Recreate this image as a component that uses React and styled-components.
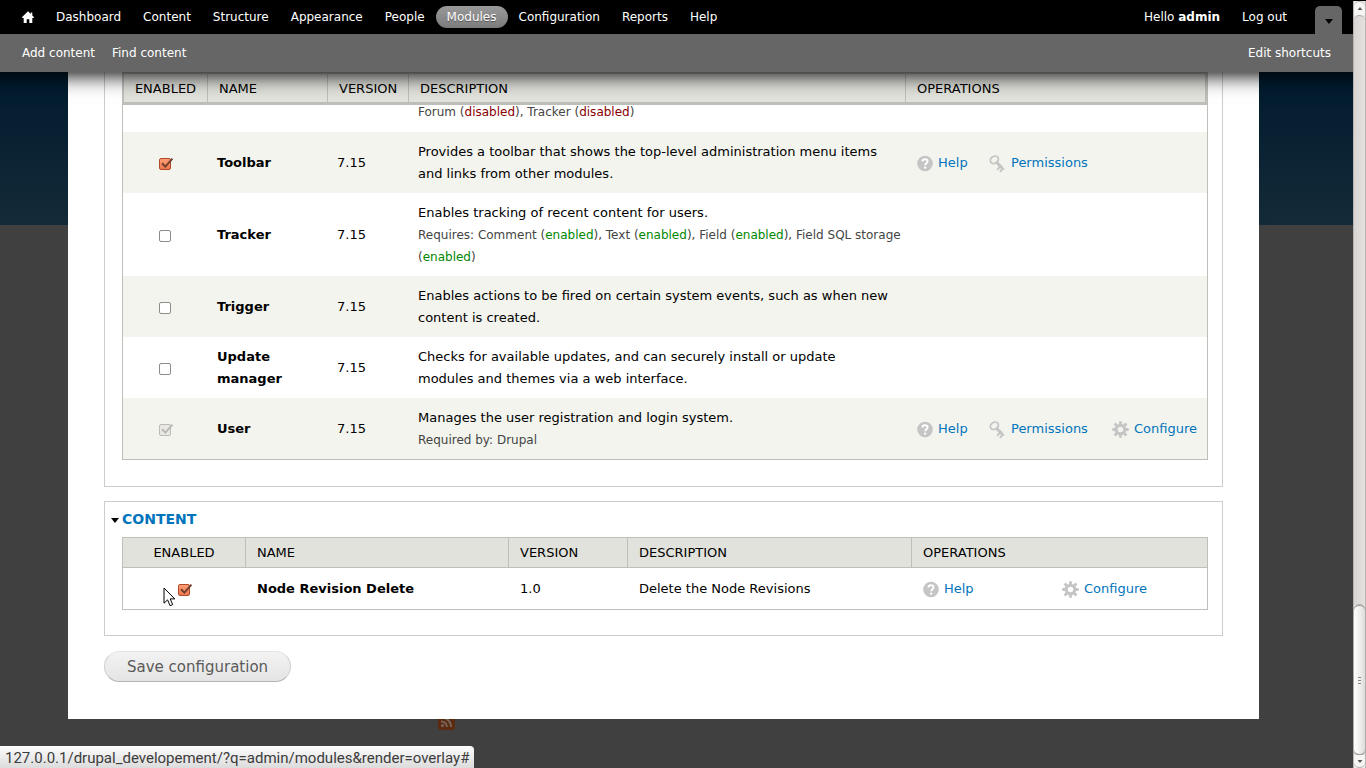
import React from "react"
import styled, { createGlobalStyle, css } from "styled-components"

const GlobalStyle = createGlobalStyle`
  * {
    box-sizing: border-box;
  }
  body {
    margin: 0;
    overflow: hidden;
    font-family: "DejaVu Sans", Verdana, sans-serif;
    font-size: 13px;
    line-height: 22px;
    color: #000;
  }
  a {
    color: #0074bd;
    text-decoration: none;
  }
`

const Screen = styled.div`
  display: flex;
  height: 100vh;
  background: #000;
`

const Viewport = styled.div`
  position: relative;
  flex: 1;
  min-width: 0;
  overflow: hidden;
  background: linear-gradient(#001b2e 72px, #142a38 225px, #404040 225px);
`

/* toolbar */

const Toolbar = styled.header`
  position: relative;
  z-index: 10;
  margin: 0 -20px;
  padding: 0 20px;
  background: #666;
  box-shadow: 0 3px 20px #000;
  font-size: 12px;
  a {
    color: #fff;
  }
`

const ToolbarMenu = styled.div`
  display: flex;
  justify-content: space-between;
  height: 34px;
  margin: 0 -20px;
  padding: 0 31px;
  background: #000;
`

const MenuList = styled.nav`
  display: flex;
  align-items: center;
`

const MenuLink = styled.a`
  display: flex;
  align-items: center;
  height: 22px;
  padding: 0 11px;
  border-radius: 11px;
  white-space: pre;
  ${({ $active }) =>
    $active &&
    css`
      background: linear-gradient(#999, #7c7c7c);
      text-shadow: 0 1px 0 #555;
    `}
`

const DrawerToggle = styled.button`
  display: flex;
  align-items: center;
  justify-content: center;
  align-self: flex-end;
  width: 27px;
  height: 28px;
  margin-left: 17px;
  padding: 2px 0 0;
  border: 0;
  border-radius: 5px 5px 0 0;
  background: #666;
`

const ToolbarDrawer = styled.div`
  display: flex;
  align-items: center;
  justify-content: space-between;
  height: 38px;
  padding: 0 22px;
`

const Shortcuts = styled.nav`
  display: flex;
  gap: 17px;
`

/* overlay */

const Sheet = styled.main`
  position: relative;
  margin: 0 94px 0 68px;
  padding: 0 36px 37px;
  background: #fff;
`

const Fieldset = styled.section`
  margin-bottom: 15px;
  padding: 7px 14px 25px 17px;
  border: 1px solid #ccc;
  ${({ $scrolled }) =>
    $scrolled &&
    css`
      margin-bottom: 14px;
      padding: 0 14px 26px 17px;
      border-top: 0;
    `}
`

const Legend = styled.h2`
  display: flex;
  align-items: center;
  gap: 3px;
  height: 20px;
  margin: 0 0 8px -11px;
  font-size: 14px;
  text-transform: uppercase;
  svg {
    margin-top: 2px;
  }
`

const ModuleTable = styled.table`
  width: 100%;
  table-layout: fixed;
  border: 1px solid #bebfb9;
  border-spacing: 0;
  td {
    padding: 9px ${({ $gutter }) => $gutter}px 8px;
  }
  td:first-child {
    padding: 0;
    text-align: center;
  }
  ${({ $sticky }) =>
    $sticky &&
    css`
      border-top: 0;
      th {
        height: 33px;
        padding-top: 1px;
        border-top: 2px solid #bebfb9;
        border-bottom-width: 3px;
      }
      th:first-child {
        padding-top: 1px;
        border-left: 1px solid #bebfb9;
      }
      th:last-child {
        border-right: 2px solid #bebfb9;
      }
    `}
`

const Col = styled.col`
  width: ${({ $width }) => ($width ? `${$width}px` : "auto")};
`

const HeadCell = styled.th`
  height: 30px;
  padding: 0 11px;
  border-bottom: 1px solid #bebfb9;
  background: #e1e2dc;
  font-weight: normal;
  line-height: 20px;
  text-align: left;
  text-transform: uppercase;
  & + & {
    border-left: 1px solid #bebfb9;
  }
  &:first-child {
    padding: 0;
    text-align: center;
  }
`

const Row = styled.tr`
  background: ${({ $even }) => ($even ? "#f3f4ee" : "#fff")};
  height: ${({ $height }) => ($height ? `${$height}px` : "auto")};
`

const ScrolledRow = styled.tr`
  && td {
    padding-top: 0;
    padding-bottom: 13px;
    line-height: 14px;
  }
`

const DescriptionCell = styled.td`
  && {
    padding-right: 16px;
  }
`

const Requirements = styled.div`
  margin-right: -16px;
  font-size: 12px;
  line-height: ${({ $tight }) => ($tight ? "14px" : "22px")};
  color: #444;
`

const Status = styled.span`
  color: ${({ $on }) => ($on ? "#080" : "#800")};
`

const ModuleName = styled.label`
  font-weight: bold;
`

const CheckWrap = styled.span`
  position: relative;
  display: inline-block;
  width: 12px;
  height: 12px;
  margin-top: 1px;
  vertical-align: middle;
  svg {
    position: absolute;
    top: -1px;
    left: 0;
    pointer-events: none;
  }
`

const CheckInput = styled.input`
  appearance: none;
  display: block;
  width: 12px;
  height: 12px;
  margin: 0;
  border: 1px solid #8f8b87;
  border-radius: 2px;
  background: #fff;
  &:checked {
    border-color: #b0482a;
    background: linear-gradient(#ff9d75, #ee7a50);
  }
  &:disabled {
    border-color: #bdbbb7;
    background: #e9e8e4;
  }
`

const OperationCell = styled.td`
  && {
    padding-left: 12px;
    padding-right: 0;
  }
`

const OperationLink = styled.a`
  display: flex;
  align-items: center;
  gap: 5px;
  svg {
    flex: none;
    margin-top: 1px;
  }
`

const SaveButton = styled.button`
  display: block;
  height: 31px;
  padding: 0 22px;
  border: 1px solid #d0d0d0;
  border-top-color: #e4e4e4;
  border-bottom-color: #b4b4b4;
  border-radius: 16px;
  background: linear-gradient(#f3f3f3, #e4e4e4);
  color: #5a5a5a;
  font-family: inherit;
  font-size: 15px;
`

/* things lying over the page */

const FeedIcon = styled.svg`
  position: absolute;
  top: 714px;
  left: 438px;
`

const StatusBubble = styled.div`
  position: absolute;
  bottom: 0;
  left: 0;
  height: 22px;
  padding: 0 5px;
  border-top: 1px solid #fff;
  border-radius: 0 4px 0 0;
  background: linear-gradient(#fbfbfb, #dcdcdc);
  color: #3c3c3c;
  font-family: Roboto, sans-serif;
  font-size: 15px;
`

const Cursor = styled.svg`
  position: absolute;
  top: 587px;
  left: 163px;
  z-index: 20;
`

/* scrollbar */

const Scrollbar = styled.div`
  display: flex;
  flex-direction: column;
  width: 13px;
  margin-top: 1px;
  border: 1px solid #b8b4b1;
  border-width: 0 1px;
  background: #edebea;
`

const ScrollTip = styled.div`
  display: flex;
  align-items: center;
  justify-content: center;
  height: ${({ $height }) => $height}px;
  border: 1px solid #b8b4b1;
  border-width: ${({ $end }) => ($end ? "0 0 1px" : "1px 0 0")};
  border-radius: ${({ $end }) => ($end ? "0 0 6px 6px" : "6px 6px 0 0")};
  background: #f6f5f4;
`

const ScrollTrack = styled.div`
  flex: 1;
  border-top: 1px solid #a9a5a2;
  border-radius: 6px 6px 0 0;
  background: linear-gradient(90deg, #d8d4d2, #e4e1df);
`

const ScrollThumb = styled.div`
  display: flex;
  flex-direction: column;
  align-items: center;
  justify-content: center;
  gap: 2px;
  height: 150px;
  border: 1px solid #979390;
  border-width: 1px 0;
  border-radius: 6px;
  background: linear-gradient(90deg, #fff, #f1f0ef 50%, #dedbd9);
  box-shadow: 0 0 0 1px #b0aca9;
  span {
    width: 3px;
    height: 1px;
    background: #8a8784;
  }
`

const HomeIcon = () => (
  <svg width="12" height="12" viewBox="0 0 12 12" aria-label="Home">
    <path
      d="M6 0.3 0.2 6v1h1.5v5h3V8.2h2.6V12h3V7h1.5V6L10.3 4.4V1.6H8.8V3z"
      fill="#fff"
    />
  </svg>
)

const Arrow = ({ width = 8, height = 5, color = "#000", up }) => (
  <svg width={width} height={height} viewBox="0 0 8 5">
    <path d={up ? "M0 5h8L4 0z" : "M0 0h8L4 5z"} fill={color} />
  </svg>
)

const HelpIcon = () => (
  <svg width="16" height="17" viewBox="0 0 16 17">
    <circle cx="8" cy="8.5" r="7.8" fill="#c5c5c5" />
    <path
      d="M5.4 6.6C5.4 4.9 6.5 4.2 8 4.2s2.6.8 2.6 2.1c0 1.9-2.4 1.9-2.4 4"
      fill="none"
      stroke="#fff"
      strokeWidth="1.9"
    />
    <circle cx="8.1" cy="12.6" r="1.2" fill="#fff" />
  </svg>
)

const KeyIcon = () => (
  <svg width="17" height="18" viewBox="0 0 17 18" fill="none" stroke="#c5c5c5">
    <ellipse
      cx="5.4"
      cy="4.8"
      rx="4.3"
      ry="3.4"
      strokeWidth="1.8"
      transform="rotate(-35 5.4 4.8)"
    />
    <path d="M7.4 7.2l6 6" strokeWidth="3" />
    <path d="M11.4 11.2l-3.2 3.6M14 13.2l-3 3.8" strokeWidth="2" />
    <path d="M11 8.6l4.8 6.2-3.6.2z" fill="#c5c5c5" stroke="none" />
  </svg>
)

const GearIcon = () => (
  <svg width="17" height="17" viewBox="0 0 17 17" fill="none" stroke="#c5c5c5">
    <circle cx="8.5" cy="8.5" r="4.3" strokeWidth="3.1" />
    <g strokeWidth="2.8">
      <path d="M8.5 0.3v3M8.5 13.7v3M0.3 8.5h3M13.7 8.5h3" />
      <path d="M2.6 2.6l2.2 2.2M12.2 12.2l2.2 2.2M14.4 2.6l-2.2 2.2M4.8 12.2l-2.2 2.2" />
    </g>
  </svg>
)

const Operation = ({ icon: Icon, children }) => (
  <OperationCell>
    {children && (
      <OperationLink href="#">
        <Icon />
        {children}
      </OperationLink>
    )}
  </OperationCell>
)

const Checkbox = ({ id, checked, disabled }) => (
  <CheckWrap>
    <CheckInput
      type="checkbox"
      id={id}
      defaultChecked={checked}
      disabled={disabled}
    />
    {checked && (
      <svg width="15" height="12" viewBox="0 0 15 12">
        <path
          d="M3 6.2l3.4 3.4L13.4 1.6"
          fill="none"
          stroke={disabled ? "#bab8b5" : "#70402f"}
          strokeWidth="2"
        />
      </svg>
    )}
  </CheckWrap>
)

const TableHead = ({ widths }) => (
  <>
    <colgroup>
      {widths.map((width, i) => (
        <Col key={i} $width={width} />
      ))}
    </colgroup>
    <thead>
      <tr>
        <HeadCell>Enabled</HeadCell>
        <HeadCell>Name</HeadCell>
        <HeadCell>Version</HeadCell>
        <HeadCell>Description</HeadCell>
        <HeadCell colSpan={3}>Operations</HeadCell>
      </tr>
    </thead>
  </>
)

const ModuleRow = ({ module, even, height }) => {
  const { id, name, version, description, requires, ops = [] } = module
  return (
    <Row $even={even} $height={height}>
      <td>
        <Checkbox id={id} checked={module.checked} disabled={module.locked} />
      </td>
      <td>
        <ModuleName htmlFor={id}>{name}</ModuleName>
      </td>
      <td>{version}</td>
      <DescriptionCell>
        {description}
        {requires && <Requirements>{requires}</Requirements>}
      </DescriptionCell>
      <Operation icon={HelpIcon}>{ops.includes("help") && "Help"}</Operation>
      <Operation icon={KeyIcon}>
        {ops.includes("permissions") && "Permissions"}
      </Operation>
      <Operation icon={GearIcon}>
        {ops.includes("configure") && "Configure"}
      </Operation>
    </Row>
  )
}

const enabled = <Status $on>enabled</Status>
const disabled = <Status>disabled</Status>

const coreModules = [
  {
    id: "toolbar",
    name: "Toolbar",
    version: "7.15",
    checked: true,
    description:
      "Provides a toolbar that shows the top-level administration menu items and links from other modules.",
    ops: ["help", "permissions"],
  },
  {
    id: "tracker",
    name: "Tracker",
    version: "7.15",
    description: "Enables tracking of recent content for users.",
    requires: (
      <>
        Requires: Comment ({enabled}), Text ({enabled}), Field ({enabled}),
        Field SQL storage ({enabled})
      </>
    ),
  },
  {
    id: "trigger",
    name: "Trigger",
    version: "7.15",
    description:
      "Enables actions to be fired on certain system events, such as when new content is created.",
  },
  {
    id: "update",
    name: "Update manager",
    version: "7.15",
    description:
      "Checks for available updates, and can securely install or update modules and themes via a web interface.",
  },
  {
    id: "user",
    name: "User",
    version: "7.15",
    checked: true,
    locked: true,
    description: "Manages the user registration and login system.",
    requires: "Required by: Drupal",
    ops: ["help", "permissions", "configure"],
  },
]

const nodeRevisionDelete = {
  id: "node-revision-delete",
  name: "Node Revision Delete",
  version: "1.0",
  checked: true,
  description: "Delete the Node Revisions",
  ops: ["help", "configure"],
}

const menu = [
  "Dashboard",
  "Content",
  "Structure",
  "Appearance",
  "People",
  "Modules",
  "Configuration",
  "Reports",
  "Help",
]

const App = () => {
  return (
    <Screen>
      <GlobalStyle />
      <Viewport>
        <Toolbar>
          <ToolbarMenu>
            <MenuList>
              <MenuLink href="#">
                <HomeIcon />
              </MenuLink>
              {menu.map(item => (
                <MenuLink href="#" key={item} $active={item === "Modules"}>
                  {item}
                </MenuLink>
              ))}
            </MenuList>
            <MenuList>
              <MenuLink href="#">
                Hello <strong>admin</strong>
              </MenuLink>
              <MenuLink href="#">Log out</MenuLink>
              <DrawerToggle aria-label="Hide shortcuts">
                <Arrow />
              </DrawerToggle>
            </MenuList>
          </ToolbarMenu>
          <ToolbarDrawer>
            <Shortcuts>
              <a href="#">Add content</a>
              <a href="#">Find content</a>
            </Shortcuts>
            <a href="#">Edit shortcuts</a>
          </ToolbarDrawer>
        </Toolbar>

        <FeedIcon width="17" height="16" viewBox="0 0 17 16">
          <rect width="17" height="16" rx="3" fill="#5c2a10" />
          <g fill="none" stroke="#77655c" strokeWidth="2">
            <path d="M3 3.5a9.5 9.5 0 0 1 10 9.5M3 7.5a5.5 5.5 0 0 1 6 5.5" />
          </g>
          <circle cx="4.5" cy="11.5" r="1.6" fill="#77655c" />
        </FeedIcon>

        <Sheet>
          <Fieldset $scrolled>
            <ModuleTable $sticky $gutter={10}>
              <TableHead widths={[84, 120, 81, null, 72, 123, 107]} />
              <tbody>
                <ScrolledRow>
                  <td />
                  <td />
                  <td />
                  <DescriptionCell>
                    <Requirements $tight>
                      Forum ({disabled}), Tracker ({disabled})
                    </Requirements>
                  </DescriptionCell>
                  <td colSpan={3} />
                </ScrolledRow>
                {coreModules.map((module, i) => (
                  <ModuleRow key={module.id} module={module} even={i % 2 === 0} />
                ))}
              </tbody>
            </ModuleTable>
          </Fieldset>

          <Fieldset>
            <Legend>
              <Arrow />
              <a href="#">Content</a>
            </Legend>
            <ModuleTable $gutter={12}>
              <TableHead widths={[122, 263, 119, null, 72, 67, 157]} />
              <tbody>
                <ModuleRow module={nodeRevisionDelete} height={41} />
              </tbody>
            </ModuleTable>
          </Fieldset>

          <SaveButton>Save configuration</SaveButton>
        </Sheet>

        <StatusBubble>
          127.0.0.1/drupal_developement/?q=admin/modules&amp;render=overlay#
        </StatusBubble>
        <Cursor width="13" height="20" viewBox="0 0 13 20">
          <path
            d="M1 1v15.2l3.6-3.3 2.5 5.8 2.6-1.1-2.5-5.7h4.6z"
            fill="#fff"
            stroke="#000"
          />
        </Cursor>
      </Viewport>

      <Scrollbar>
        <ScrollTip $height={14}>
          <Arrow up width={6} height={3} color="#555" />
        </ScrollTip>
        <ScrollTrack />
        <ScrollThumb>
          <span />
          <span />
          <span />
        </ScrollThumb>
        <ScrollTip $end $height={13}>
          <Arrow width={6} height={3} color="#555" />
        </ScrollTip>
      </Scrollbar>
    </Screen>
  )
}

export default App
